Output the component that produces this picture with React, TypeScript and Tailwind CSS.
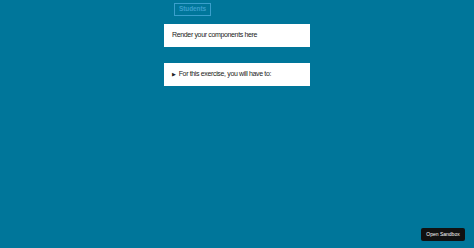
export default function App() {
  return (
    <div className="relative h-[248px] w-[474px] overflow-hidden bg-[#00769a] font-['Liberation_Sans',Arial,sans-serif]">
      <div className="mx-auto flex w-[146px] flex-col pt-[3px]">
        <button
          type="button"
          className="ml-[10px] h-[13px] w-[37px] border border-[#3a9fcc] text-[6.5px] font-bold leading-none tracking-[-0.1px] text-[#3a9fcc]"
        >
          Students
        </button>
        <div className="mt-[8px] flex h-[23px] items-center bg-white px-[8px] text-[7px] tracking-[-0.35px] text-[#222]">
          Render your components here
        </div>
        <div className="mt-[16px] flex h-[23px] items-center gap-[3px] bg-white px-[8px] text-[7px] tracking-[-0.35px] text-[#222]">
          <span className="text-[5px]">▶</span>
          <span>For this exercise, you will have to:</span>
        </div>
      </div>
      <button
        type="button"
        className="absolute bottom-[7px] right-[9px] h-[13px] w-[44px] rounded-[2px] bg-[#111] text-[5px] leading-none text-white"
      >
        Open Sandbox
      </button>
    </div>
  );
}
